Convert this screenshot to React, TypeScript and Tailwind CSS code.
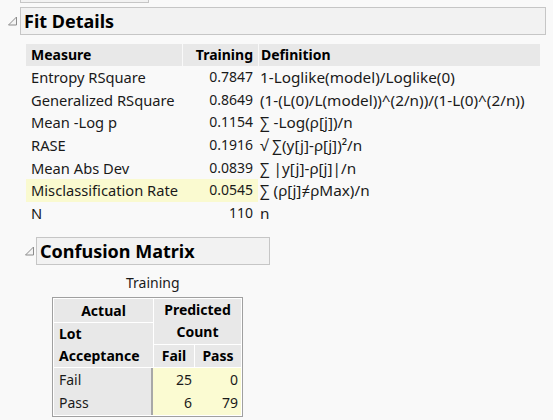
import React from 'react';

const font = { fontFamily: '"Noto Sans", "Open Sans", sans-serif' };

function Disclosure() {
  return (
    <svg width="11" height="10" viewBox="0 0 11 10" className="shrink-0">
      <polygon points="9.5,1 9.5,9 1.5,9" fill="#f4f4f4" stroke="#8c8c8c" strokeWidth="1" />
    </svg>
  );
}

const rows = [
  { measure: 'Entropy RSquare', value: '0.7847', def: '1-Loglike(model)/Loglike(0)' },
  { measure: 'Generalized RSquare', value: '0.8649', def: '(1-(L(0)/L(model))^(2/n))/(1-L(0)^(2/n))' },
  { measure: 'Mean -Log p', value: '0.1154', def: '∑ -Log(ρ[j])/n' },
  { measure: 'RASE', value: '0.1916', def: '√ ∑(y[j]-ρ[j])²/n' },
  { measure: 'Mean Abs Dev', value: '0.0839', def: '∑ |y[j]-ρ[j]|/n' },
  { measure: 'Misclassification Rate', value: '0.0545', def: '∑ (ρ[j]≠ρMax)/n', hl: true },
  { measure: 'N', value: '110', def: 'n' },
];

export default function App() {
  return (
    <div className="w-[553px] h-[420px] overflow-hidden bg-[#f9f9f9] text-[#1a1a1a]" style={font}>
      {/* tail of previous outline box */}
      <div className="ml-[20px] w-[129px] h-[3px] border-x border-b border-[#c6c6c6] bg-[#f2f2f2]" />

      {/* Fit Details */}
      <div className="mt-[4px] flex items-center">
        <div className="ml-[7px] mr-[2px]">
          <Disclosure />
        </div>
        <div className="w-[526px] h-[28px] border border-[#c6c6c6] bg-[#f2f2f2] flex items-center pl-[3px]">
          <span className="text-[18px] font-bold text-black leading-none">Fit Details</span>
        </div>
      </div>

      <div className="ml-[26px] mt-[9px] text-[14px]">
        <div className="flex gap-px h-[22px] font-bold text-black">
          <div className="w-[156px] bg-[#e8e8e8] pl-[5px] leading-[22px]">Measure</div>
          <div className="w-[75px] bg-[#e8e8e8] pr-[5px] text-right leading-[22px]">Training</div>
          <div className="w-[281px] bg-[#e8e8e8] pl-[2px] leading-[22px]">Definition</div>
        </div>
        {rows.map((r) => (
          <div key={r.measure} className="flex h-[22.7px] leading-[22.7px]">
            <div className={`w-[157px] pl-[5px] text-[14.7px] whitespace-nowrap ${r.hl ? 'bg-[#fafad0]' : ''}`}>{r.measure}</div>
            <div className={`w-[75px] pr-[5px] text-right ${r.hl ? 'bg-[#fafad0]' : ''}`}>{r.value}</div>
            <div className="pl-[2px] text-[15.3px] whitespace-nowrap">{r.def}</div>
          </div>
        ))}
      </div>

      {/* Confusion Matrix */}
      <div className="mt-[12px] flex items-center">
        <div className="ml-[24px] mr-px">
          <Disclosure />
        </div>
        <div className="w-[234px] h-[28px] border border-[#c6c6c6] bg-[#f2f2f2] flex items-center pl-[3px]">
          <span className="text-[18px] font-bold text-black leading-none">Confusion Matrix</span>
        </div>
      </div>

      <div className="ml-[126px] mt-[7px] text-[14px] leading-[22px]">Training</div>

      <div className="ml-[52px] mt-[3px] w-[191px] border border-[#a0a0a0] p-px bg-white text-[14px]">
        <div className="flex gap-px font-bold text-black">
          <div className="w-[99px] flex flex-col gap-px">
            <div className="h-[23px] bg-[#e8e8e8] text-center leading-[23px]">Actual</div>
            <div className="h-[44px] bg-[#e8e8e8] pl-[5px] flex flex-col leading-[22px]">
              <span>Lot</span>
              <span>Acceptance</span>
            </div>
          </div>
          <div className="w-[87px] flex flex-col gap-px">
            <div className="h-[45px] bg-[#e8e8e8] flex flex-col items-center justify-center leading-[22px]">
              <span>Predicted</span>
              <span>Count</span>
            </div>
            <div className="flex gap-px h-[22px] leading-[22px]">
              <div className="w-[40px] bg-[#e8e8e8] text-center">Fail</div>
              <div className="w-[46px] bg-[#e8e8e8] text-center">Pass</div>
            </div>
          </div>
        </div>
        <div className="mt-px flex">
          <div className="w-[99px] bg-[#e8e8e8] pl-[5px] border-r-2 border-[#a8a8a8]">
            <div className="h-[23px] leading-[23px]">Fail</div>
            <div className="h-[24px] leading-[24px]">Pass</div>
          </div>
          <div className="flex-1 bg-[#fbfbd2]">
            <div className="flex h-[23px] leading-[23px]">
              <div className="w-[42px] text-right pr-[3px]">25</div>
              <div className="flex-1 text-right pr-[3px]">0</div>
            </div>
            <div className="flex h-[24px] leading-[24px]">
              <div className="w-[42px] text-right pr-[3px]">6</div>
              <div className="flex-1 text-right pr-[3px]">79</div>
            </div>
          </div>
        </div>
      </div>
    </div>
  );
}
